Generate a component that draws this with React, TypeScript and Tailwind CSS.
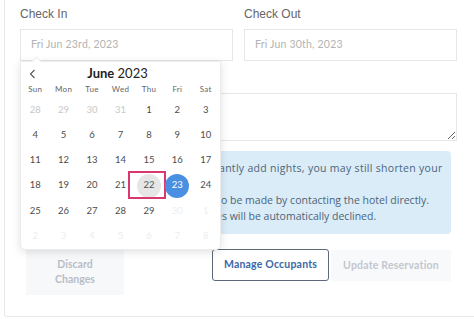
import React from 'react';

const FONT = { fontFamily: 'Lato, "Noto Sans", sans-serif' };
const INFO = { fontFamily: '"Open Sans", "Noto Sans", sans-serif' };
const LABEL = { fontFamily: '"Liberation Sans", Arial, sans-serif' };

type Day = { n: number; tone: 'prev' | 'on' | 'off' };

const weeks: Day[][] = [
  [28, 29, 30, 31].map(n => ({ n, tone: 'prev' as const })).concat([1, 2, 3].map(n => ({ n, tone: 'on' as const }))),
  [4, 5, 6, 7, 8, 9, 10].map(n => ({ n, tone: 'on' as const })),
  [11, 12, 13, 14, 15, 16, 17].map(n => ({ n, tone: 'on' as const })),
  [18, 19, 20, 21, 22, 23, 24].map(n => ({ n, tone: 'on' as const })),
  [25, 26, 27, 28, 29].map(n => ({ n, tone: 'on' as const })).concat([30, 1].map(n => ({ n, tone: 'off' as const }))),
  [2, 3, 4, 5, 6, 7, 8].map(n => ({ n, tone: 'off' as const })),
];

function DayCell({ d, row }: { d: Day; row: number }) {
  const hovered = row === 3 && d.n === 22;
  const selected = row === 3 && d.n === 23;
  return (
    <div className="relative flex items-center justify-center h-[25.3px]">
      {hovered && (
        <span className="absolute left-[-6.5px] top-[-1.5px] w-[38px] h-[28px] border-2 border-[#d9386f]" />
      )}
      <span
        className={`flex items-center justify-center w-[24px] h-[24px] rounded-full text-[9.5px] ${
          selected
            ? 'bg-[#4a90e2] text-white'
            : hovered
            ? 'bg-[#e6e6e6] text-[#555]'
            : d.tone === 'prev'
            ? 'text-[#c8c8c8]'
            : d.tone === 'off'
            ? 'text-[#ededed]'
            : 'text-[#4d4d4d]'
        }`}
      >
        {d.n}
      </span>
    </div>
  );
}

function Calendar() {
  return (
    <div
      style={FONT}
      className="absolute left-[20px] top-[61px] w-[201px] h-[189px] bg-white border border-[#ececec] rounded-b-[5px] shadow-[0_2px_8px_rgba(0,0,0,0.12)]"
    >
      <span className="absolute left-[12px] top-[-4px] w-[7px] h-[7px] rotate-45 bg-white border-l border-t border-[#ececec]" />
      <div className="relative flex items-center justify-center h-[22px] pt-[1px]">
        <svg className="absolute left-[8px] top-[7px]" width="7" height="10" viewBox="0 0 7 10">
          <polyline points="5.5,1 1.5,5 5.5,9" fill="none" stroke="#555" strokeWidth="1.1" />
        </svg>
        <span className="text-[13px] text-[#222] ml-[-6px]">
          <span className="font-bold">June</span> 2023
        </span>
      </div>
      <div className="grid grid-cols-7 h-[10px] items-center text-[8px] text-[#666] tracking-[0.3px]">
        {['Sun', 'Mon', 'Tue', 'Wed', 'Thu', 'Fri', 'Sat'].map(w => (
          <span key={w} className="text-center leading-[10px]">{w}</span>
        ))}
      </div>
      <div className="mt-[3px]">
        {weeks.map((wk, i) => (
          <div key={i} className="grid grid-cols-7">
            {wk.map((d, j) => <DayCell key={j} d={d} row={i} />)}
          </div>
        ))}
      </div>
    </div>
  );
}

// the start of each line sits under the open date picker
function Line({ lead, w, rest, extra = '' }: { lead: string; w: string; rest: string; extra?: string }) {
  return (
    <div className="flex">
      <span className={`${w} overflow-hidden text-right shrink-0`}>{lead}</span>
      <span className={extra}>{rest}</span>
    </div>
  );
}

export default function App() {
  return (
    <div className="relative w-[474px] h-[319px] overflow-hidden bg-white">
      <div className="ml-[4px] w-[520px] border-l border-b border-[#e8e8e8] rounded-bl-[3px] pl-[15px] pt-[6px] pb-[21px]">
        <div className="w-[437px]">
          <div className="grid grid-cols-2 gap-x-[11px]">
            <div>
              <label style={LABEL} className="block text-[12px] leading-[16px] text-[#666]">Check In</label>
              <div style={FONT} className="mt-[7px] h-[32px] border border-[#e6e6e6] px-[10px] flex items-center text-[10.5px] text-[#b3b3b3] tracking-[0.2px]">
                Fri Jun 23rd, 2023
              </div>
            </div>
            <div>
              <label style={LABEL} className="block text-[12px] leading-[16px] text-[#666]">Check Out</label>
              <div style={FONT} className="mt-[7px] h-[32px] border border-[#e6e6e6] px-[10px] flex items-center text-[10.5px] text-[#b3b3b3] tracking-[0.2px]">
                Fri Jun 30th, 2023
              </div>
            </div>
          </div>

          <label style={LABEL} className="block mt-[9px] text-[12px] leading-[16px] text-[#666]">Special Requests</label>
          <textarea className="block mt-[7px] w-full h-[48px] border border-[#e6e6e6] outline-none resize" />

          <div className="mx-[6px]">
            <div
              style={INFO}
              className="mt-[10px] h-[83px] rounded-[4px] bg-[#d9ecf8] px-[12px] pt-[9px] text-[10.5px] leading-[16px] text-[#4d6478] whitespace-nowrap"
            >
              <Line w="w-[181px]" lead="While you cannot inst" rest="antly add nights, you may still shorten your" extra="tracking-[0.3px]" />
              <div>stay.</div>
              <Line w="w-[183px]" lead="Additional nights will need t" rest="o be made by contacting the hotel directly." />
              <Line w="w-[184px]" lead="Requests made online" rest="s will be automatically declined." />
            </div>

            <div style={FONT} className="mt-[15px] flex items-start justify-between font-bold text-[10.5px]">
              <button className="w-[98px] h-[46px] bg-[#f7f8fa] text-[#b9bdc6] leading-[15px]">
                Discard<br />Changes
              </button>
              <div className="flex gap-[2px]">
                <button className="w-[117px] h-[32px] rounded-[3px] border border-[#5d6878] text-[#3b67a6] tracking-[0.2px]">
                  Manage Occupants
                </button>
                <button className="mt-[1px] w-[120px] h-[31px] bg-[#f8f9fb] text-[#c3c7cf] tracking-[0.2px]">
                  Update Reservation
                </button>
              </div>
            </div>
          </div>
        </div>
      </div>
      <Calendar />
    </div>
  );
}
